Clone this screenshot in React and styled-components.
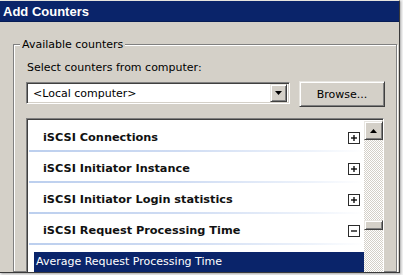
import React from 'react';
import styled, { createGlobalStyle } from 'styled-components';

const GlobalStyle = createGlobalStyle`
  html, body { margin: 0; padding: 0; background: #f3f3f3; }
  body {
    font-family: "DejaVu Sans", Verdana, sans-serif;
    font-size: 11px;
    color: #000;
  }
  * { box-sizing: border-box; }
`;

const Page = styled.div`
  width: 403px;
  height: 275px;
  overflow: hidden;
  background: #f3f3f3;
`;

const Window = styled.div`
  width: 400px;
  height: 273px;
  background: #d4d0c8;
  border-top: 1px solid #e6e4de;
  border-right: 1px solid #3a3a3a;
  border-bottom: 1px solid #3a3a3a;
  box-shadow: 1px 1px 2px rgba(0, 0, 0, 0.3);
  overflow: hidden;
  display: flex;
  flex-direction: column;
`;

const TitleBar = styled.div`
  height: 21px;
  flex: none;
  background: #0a246a;
  border-bottom: 1px solid #071c55;
  color: #fff;
  font-family: "Liberation Sans", Arial, sans-serif;
  font-weight: bold;
  font-size: 13px;
  line-height: 21px;
  padding-left: 3px;
`;

const Body = styled.div`
  flex: 1;
  padding: 16px 2px 0 13px;
  min-height: 0;
  display: flex;
`;

const GroupBox = styled.fieldset`
  margin: 0;
  flex: 1;
  min-width: 0;
  padding: 10px 11px 0 12px;
  border: 1px solid #808080;
  box-shadow: 1px 1px 0 #fff, inset 1px 1px 0 #fff;
`;

const Legend = styled.legend`
  margin-left: -6px;
  padding: 0 2px;
  line-height: 13px;
  font-size: 11px;
  background: #d4d0c8;
`;

const FieldLabel = styled.div`
  line-height: 13px;
  padding-left: 1px;
  margin-bottom: 7px;
  white-space: nowrap;
`;

const ComboRow = styled.div`
  display: flex;
  align-items: flex-start;
  gap: 9px;
`;

const sunken = `
  border: 1px solid;
  border-color: #808080 #fff #fff #808080;
  box-shadow: inset 1px 1px 0 #404040, inset -1px -1px 0 #d4d0c8;
`;

const raised = `
  background: #d4d0c8;
  border: 1px solid;
  border-color: #e8e6e1 #404040 #404040 #e8e6e1;
  box-shadow: inset 1px 1px 0 #fff, inset -1px -1px 0 #808080;
`;

const Combo = styled.div`
  ${sunken};
  width: 264px;
  height: 22px;
  margin-top: 1px;
  background: #fff;
  display: flex;
  align-items: center;
  padding: 2px 2px 2px 6px;
`;

const ComboText = styled.span`
  flex: 1;
  line-height: 13px;
  white-space: nowrap;
`;

const ArrowButton = styled.div`
  ${raised};
  width: ${(p) => p.$w || 17}px;
  height: ${(p) => p.$h || 18}px;
  flex: none;
  display: flex;
  align-items: center;
  justify-content: center;
`;

const Button = styled.div`
  ${raised};
  width: 86px;
  height: 26px;
  flex: none;
  display: flex;
  align-items: center;
  justify-content: center;
  line-height: 13px;
`;

const ListBox = styled.div`
  ${sunken};
  margin-top: 11px;
  width: 358px;
  height: 190px;
  background: #fff;
  display: flex;
  padding: 2px 0 0 2px;
`;

const Items = styled.div`
  flex: 1;
  min-width: 0;
  display: flex;
  flex-direction: column;
`;

const CategoryRow = styled.div`
  height: 31px;
  flex: none;
  display: flex;
  align-items: center;
  padding: 2px 4px 0 14px;
  font-weight: bold;
  font-size: 11.3px;
  color: #111;
  background: linear-gradient(to right, #bccfee 0%, #cfdcf3 45%, #eef3fb 85%, #fff 100%)
    left bottom / 100% 2px no-repeat;
`;

const CategoryName = styled.span`
  flex: 1;
  white-space: nowrap;
`;

const CounterRow = styled.div`
  height: 20px;
  flex: none;
  margin: 7px 0 0 5px;
  padding-left: 2px;
  line-height: 20px;
  white-space: nowrap;
  background: ${(p) => (p.$selected ? '#0a246a' : 'transparent')};
  color: ${(p) => (p.$selected ? '#fff' : '#000')};
`;

const ScrollBar = styled.div`
  width: 19px;
  flex: none;
  display: flex;
  flex-direction: column;
`;

const Track = styled.div`
  flex: 1;
  background: repeating-conic-gradient(#fff 0 25%, #d4d0c8 0 50%) 0 0 / 2px 2px;
`;

const Thumb = styled.div`
  ${raised};
  height: 10px;
  margin-top: ${(p) => p.$offset}px;
`;

const Expander = ({ open }) => (
  <svg width="12" height="12" viewBox="0 0 12 12" style={{ flex: 'none' }}>
    <rect x="0.5" y="0.5" width="11" height="11" fill="#fff" stroke="#2b2b2b" />
    <path d="M3 6h6" stroke="#000" strokeWidth="1.3" />
    {!open && <path d="M6 3v6" stroke="#000" strokeWidth="1.3" />}
  </svg>
);

const Triangle = ({ up }) => (
  <svg width="7" height="4" viewBox="0 0 7 4">
    <path d={up ? 'M0 4h7L3.5 0z' : 'M0 0h7L3.5 4z'} fill="#000" />
  </svg>
);

const categories = [
  { name: 'iSCSI Connections', open: false },
  { name: 'iSCSI Initiator Instance', open: false },
  { name: 'iSCSI Initiator Login statistics', open: false },
  { name: 'iSCSI Request Processing Time', open: true },
];

export default function App() {
  return (
    <>
      <GlobalStyle />
      <Page>
        <Window>
          <TitleBar>Add Counters</TitleBar>
          <Body>
            <GroupBox>
              <Legend>Available counters</Legend>
              <FieldLabel>Select counters from computer:</FieldLabel>
              <ComboRow>
                <Combo>
                  <ComboText>&lt;Local computer&gt;</ComboText>
                  <ArrowButton>
                    <Triangle />
                  </ArrowButton>
                </Combo>
                <Button>Browse...</Button>
              </ComboRow>
              <ListBox>
                <Items>
                  {categories.map((c) => (
                    <CategoryRow key={c.name}>
                      <CategoryName>{c.name}</CategoryName>
                      <Expander open={c.open} />
                    </CategoryRow>
                  ))}
                  <CounterRow $selected>Average Request Processing Time</CounterRow>
                </Items>
                <ScrollBar>
                  <ArrowButton $w={19} $h={19}>
                    <Triangle up />
                  </ArrowButton>
                  <Track>
                    <Thumb $offset={80} />
                  </Track>
                </ScrollBar>
              </ListBox>
            </GroupBox>
          </Body>
        </Window>
      </Page>
    </>
  );
}
